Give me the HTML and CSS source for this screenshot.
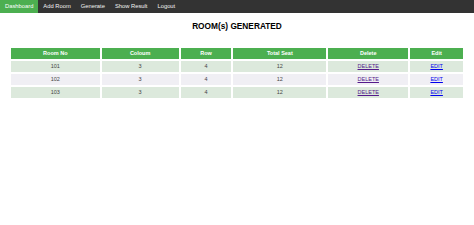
FILE: index.html
```html
<!DOCTYPE html>
<html lang="en">
<head>
    <meta charset="UTF-8">
    <meta name="viewport" content="width=device-width, initial-scale=1.0">
    <title>Rooms Generated</title>
    <link rel="stylesheet" href="styles.css">
</head>
<body>
    <!-- Navigation -->
    <nav class="topnav">
        <a class="active" href="#">Dashboard</a>
        <a href="#">Add Room</a>
        <a href="#">Generate</a>
        <a href="#">Show Result</a>
        <a href="#">Logout</a>
    </nav>

    <h2 class="title">ROOM(s) GENERATED</h2>

    <!-- Rooms table -->
    <table class="rooms">
        <tr>
            <th class="col-room">Room No</th>
            <th class="col-coloum">Coloum</th>
            <th class="col-row">Row</th>
            <th class="col-seat">Total Seat</th>
            <th class="col-delete">Delete</th>
            <th class="col-edit">Edit</th>
        </tr>
        <tr>
            <td>101</td>
            <td>3</td>
            <td>4</td>
            <td>12</td>
            <td><a class="delete-link" href="#">DELETE</a></td>
            <td><a class="edit-link" href="#">EDIT</a></td>
        </tr>
        <tr>
            <td>102</td>
            <td>3</td>
            <td>4</td>
            <td>12</td>
            <td><a class="delete-link" href="#">DELETE</a></td>
            <td><a class="edit-link" href="#">EDIT</a></td>
        </tr>
        <tr>
            <td>103</td>
            <td>3</td>
            <td>4</td>
            <td>12</td>
            <td><a class="delete-link" href="#">DELETE</a></td>
            <td><a class="edit-link" href="#">EDIT</a></td>
        </tr>
    </table>
</body>
</html>
```

FILE: styles.css
```css
/* General Styles */
body {
    font-family: "Liberation Sans", Arial, sans-serif;
    margin: 0;
    padding: 0;
    background: #fff;
}

/* Top navigation */
.topnav {
    background-color: #333;
    display: flex;
    height: 13px;
}

.topnav a {
    color: #f2f2f2;
    text-decoration: none;
    font-size: 5.8px;
    line-height: 13px;
    padding: 0 5px;
}

.topnav a.active {
    background-color: #4CAF50;
    color: white;
}

.title {
    text-align: center;
    font-size: 8.3px;
    line-height: 10px;
    margin: 8px 0 15px;
    color: #000;
}

/* Table */
.rooms {
    width: 456px;
    margin: 0 auto;
    border-spacing: 2px;
    font-size: 5.5px;
}

.rooms th,
.rooms td {
    height: 11px;
    padding: 0;
    text-align: center;
    line-height: 7px;
}

.rooms th {
    background-color: #4CAF50;
    color: white;
}

.rooms tr:nth-child(even) td {
    background-color: #dce9dc;
}

.rooms tr:nth-child(odd) td {
    background-color: #f0eff4;
}

.rooms td {
    color: #444;
}

.col-room { width: 19.7%; }
.col-coloum { width: 17.1%; }
.col-row { width: 11.3%; }
.col-seat { width: 20.6%; }
.col-delete { width: 17.8%; }
.col-edit { width: 11.7%; }

.delete-link {
    color: #551a8b;
}

.edit-link {
    color: #0000ee;
}
```
